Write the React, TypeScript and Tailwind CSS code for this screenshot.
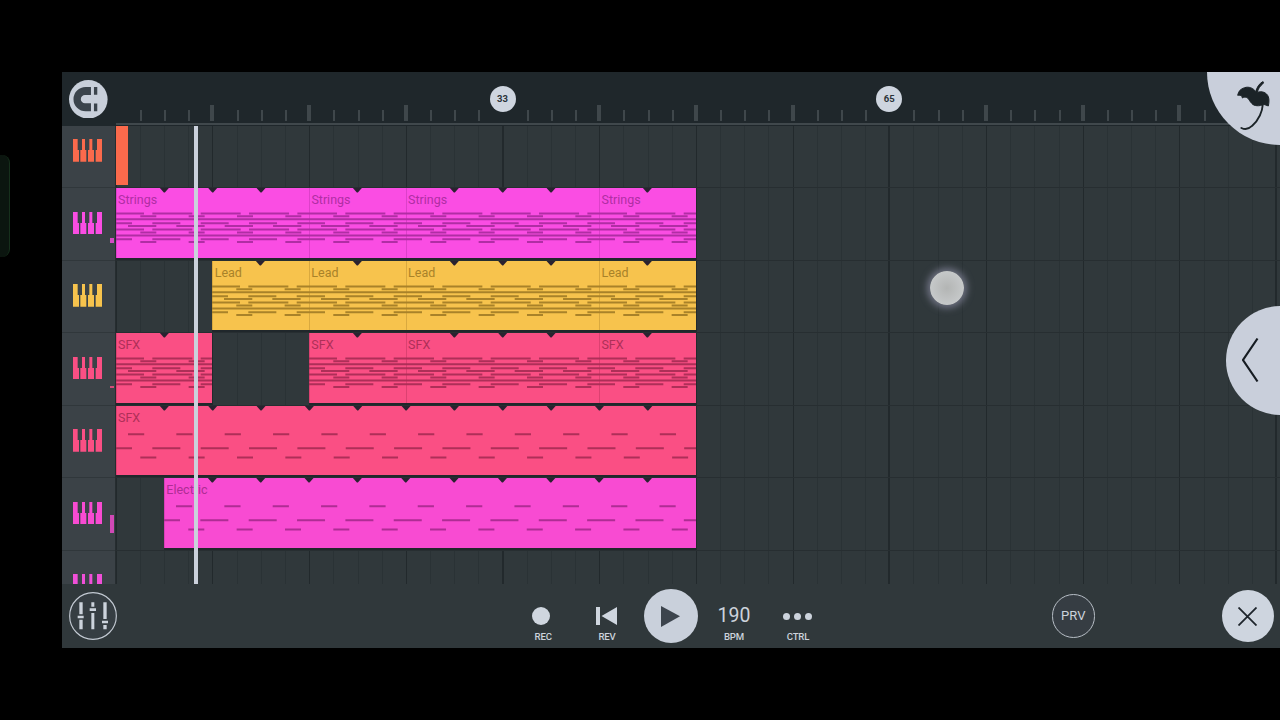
import type { ReactNode } from "react";

const BAR = 12.087;
const LOOP = BAR * 4;

type Note = [y: number, start: number, end: number];

type Clip = {
  bars: number;
  label?: string;
  gap?: boolean;
};

type Track = {
  color: string;
  ink: string;
  notes: Note[];
  clips: Clip[];
  meter?: { top: number; height: number };
};

const CHORDS: Note[] = [
  [25.6, -12, 28],
  [28.3, 24.3, 40.3],
  [31.2, -12, 36.4],
  [35.2, -12, 16],
  [38, 12, 40.3],
  [41.6, -12, 28],
  [44.4, 24.3, 40.3],
  [47.4, -12, 36.4],
  [51.2, -12, 16],
  [54, 24.3, 40.3],
];

const ARP: Note[] = [
  [28.2, 12, 28.2],
  [42.3, -12, 16],
  [51.5, 24.3, 40.3],
];

const TRACKS: Track[] = [
  { color: "#fb6a4c", ink: "#a8412c", notes: [], clips: [{ bars: 0.97 }] },
  {
    color: "#fa4de3",
    ink: "#b02ea4",
    notes: CHORDS,
    meter: { top: 50, height: 5 },
    clips: [
      { bars: 16, label: "Strings" },
      { bars: 8, label: "Strings" },
      { bars: 16, label: "Strings" },
      { bars: 8, label: "Strings" },
    ],
  },
  {
    color: "#f7c34d",
    ink: "#a98229",
    notes: CHORDS,
    clips: [
      { bars: 8, gap: true },
      { bars: 8, label: "Lead" },
      { bars: 8, label: "Lead" },
      { bars: 16, label: "Lead" },
      { bars: 8, label: "Lead" },
    ],
  },
  {
    color: "#fa4f84",
    ink: "#ae2f58",
    notes: CHORDS,
    meter: { top: 53, height: 2 },
    clips: [
      { bars: 8, label: "SFX" },
      { bars: 8, gap: true },
      { bars: 8, label: "SFX" },
      { bars: 16, label: "SFX" },
      { bars: 8, label: "SFX" },
    ],
  },
  {
    color: "#fa4f84",
    ink: "#ae2f58",
    notes: ARP,
    clips: [{ bars: 48, label: "SFX" }],
  },
  {
    color: "#f84bd2",
    ink: "#ae2d94",
    notes: ARP,
    meter: { top: 37, height: 18 },
    clips: [
      { bars: 4, gap: true },
      { bars: 44, label: "Electric" },
    ],
  },
  { color: "#f04fd8", ink: "#ae2d94", notes: [], clips: [] },
];

const COLUMNS = Array.from({ length: 49 }, (_, i) => i);

function columnStyle(i: number) {
  if (i > 0 && i % 16 === 0) return "-ml-px w-[25.174px] border-l-2 border-[#22292c]";
  if (i % 4 === 0) return "w-[24.174px] border-l border-[#22292c]";
  return "w-[24.174px] border-l border-[#2a3235]";
}

function ClipView({ clip, track }: { clip: Clip; track: Track }) {
  const width = clip.bars * BAR;
  if (clip.gap) return <div className="shrink-0" style={{ width }} />;

  const loops = Math.ceil(clip.bars / 4);
  let lines = "";
  let notches = "";
  for (let i = 0; i <= loops; i++) {
    const x = i * LOOP;
    for (const [y, start, end] of track.notes) {
      lines += `M${Math.max(0, x + start)} ${y}H${x + end}`;
    }
    if (i > 0 && i < loops) notches += `M${x - 4.5} 0H${x + 4.5}L${x + 0.5} 4.5H${x - 0.5}Z`;
  }

  return (
    <div
      className="relative h-[69.400px] shrink-0 overflow-hidden"
      style={{ width, backgroundColor: track.color }}
    >
      <svg className="absolute inset-0 size-full" fill="none">
        <path d={lines} stroke={track.ink} strokeWidth="2" />
        <path d={notches} fill="#2a2230" />
        {clip.label && <path d="M0.4 0V70" stroke={track.ink} strokeOpacity="0.55" strokeWidth="0.8" />}
      </svg>
      {clip.label && (
        <p
          className="relative pt-[4px] pl-[2.200px] text-[12.500px] leading-4 whitespace-nowrap"
          style={{ color: track.ink }}
        >
          {clip.label}
        </p>
      )}
    </div>
  );
}

function PianoIcon({ color }: { color: string }) {
  return (
    <svg viewBox="0 0 87 68" className="h-[22.700px] w-[29px]" fill={color}>
      <path d="M0 0H14V33H18V68H0ZM27 0H36V33H40V68H22V33H27ZM49 0H58V33H63V68H45V33H49ZM72 0H87V68H68V33H72Z" />
    </svg>
  );
}

function TrackHead({ track }: { track: Track }) {
  return (
    <div className="relative h-[72.500px] shrink-0 border-t border-[#30373b] pt-[23.300px] pl-[11px]">
      <PianoIcon color={track.color} />
      {track.meter && (
        <span
          className="absolute right-px w-[4px] opacity-80"
          style={{ ...track.meter, backgroundColor: track.color }}
        />
      )}
    </div>
  );
}

function Ruler() {
  return (
    <div className="flex h-[54px] bg-[#1f272b]">
      <div className="w-[53.800px] shrink-0 pt-[7.800px] pl-[7.300px]">
        <svg viewBox="0 0 116 116" className="size-[38.600px]">
          <circle cx="58" cy="58" r="58" fill="#c8cfda" />
          <path
            d="M66 21H50A36.500 36.500 0 0 0 50 94H66V70H48A12.500 12.500 0 0 1 48 45H66Z"
            fill="#3b444c"
          />
          <path d="M75 21H85V44H75ZM75 71H85V94H75Z" fill="#3b444c" />
        </svg>
      </div>
      <div className="flex min-w-0 flex-1 flex-col overflow-hidden">
        <div className="flex h-[50.500px]">
          {COLUMNS.map((i) => (
            <div key={i} className="relative flex w-[24.174px] shrink-0 items-end pb-[2px]">
              {i > 0 && i % 16 === 0 ? (
                <span className="absolute top-[13.700px] left-0 flex size-[26px] -translate-x-1/2 items-center justify-center rounded-full bg-[#ced5df] text-[9.500px] font-bold text-[#2b3339]">
                  {i * 2 + 1}
                </span>
              ) : i > 0 && i % 4 === 0 ? (
                <span className="-ml-[2px] h-[16px] w-[4px] bg-[#3f474b]" />
              ) : i > 0 ? (
                <span className="h-[11px] w-[2px] bg-[#3f474b]" />
              ) : null}
            </div>
          ))}
        </div>
        <div className="h-[2px] shrink-0 bg-[#40484c]" />
      </div>
    </div>
  );
}

function Playlist() {
  return (
    <div className="flex h-[458px] overflow-hidden">
      <div className="w-[53.800px] shrink-0 overflow-hidden border-r border-[#262d30] bg-[#3b4247]">
        <div className="-mt-[11.200px] flex flex-col">
          {TRACKS.map((track, i) => (
            <TrackHead key={i} track={track} />
          ))}
        </div>
      </div>
      <div className="relative min-w-0 flex-1 overflow-hidden">
        <div className="absolute inset-0 flex">
          {COLUMNS.map((i) => (
            <div key={i} className={`shrink-0 ${columnStyle(i)}`} />
          ))}
        </div>
        <div className="relative -mt-[11.200px] flex flex-col">
          {TRACKS.map((track, i) => (
            <div key={i} className="flex h-[72.500px] shrink-0 border-t border-[#272e31]">
              {track.clips.map((clip, j) => (
                <div
                  key={j}
                  className={clip.label ? "h-[71.500px] border-b-2 border-[#20272b]" : ""}
                >
                  <ClipView clip={clip} track={track} />
                </div>
              ))}
            </div>
          ))}
        </div>
        <div className="absolute inset-y-0 left-[78.300px] w-[4.200px] bg-[#cbd1dc]" />
      </div>
    </div>
  );
}

function Control({ label, children }: { label: string; children: ReactNode }) {
  return (
    <div className="flex w-[64px] shrink-0 flex-col items-center">
      <div className="flex h-[24px] items-center justify-center">{children}</div>
      <span className="mt-[2px] text-[9.600px] leading-[14px] font-medium tracking-[-0.200px]">{label}</span>
    </div>
  );
}

function Transport() {
  return (
    <div className="flex h-[64px] text-[#ccd3dc]">
      <svg viewBox="0 0 144 144" className="mt-[8.300px] ml-[6.800px] size-[48px] shrink-0">
        <circle cx="72" cy="72" r="70" fill="#363e43" stroke="#c3cad3" strokeWidth="3.500" />
        <path
          d="M31 31H41V67H31ZM31 83H41V112H31ZM26 71H44V79H26ZM67 31H76V44H67ZM67 63H76V112H67ZM62 49H81V57H62ZM103 31H113V81H103ZM103 99H113V112H103ZM99 86H117V94H99Z"
          fill="#ccd3dc"
        />
      </svg>
      <div className="ml-[396px] flex w-[317px] shrink-0 pt-[20px]">
        <div className="flex w-[62.200px] shrink-0 flex-col pl-[19.300px]">
          <div className="mt-[3px] size-[18px] rounded-full bg-[#cfd6df]" />
          <span className="mt-[5px] ml-[2.500px] text-[9.600px] leading-[14px] font-medium tracking-[-0.200px]">
            REC
          </span>
        </div>
        <Control label="REV">
          <svg viewBox="0 0 21 18" className="h-[18px] w-[21px]" fill="#cfd6df">
            <path d="M0 0H4V18H0ZM21 0V18L5.500 9Z" />
          </svg>
        </Control>
        <div className="-mt-[15px] mr-[4.300px] ml-[4.700px] flex size-[54px] shrink-0 items-center justify-center rounded-full bg-[#c9d0db]">
          <svg viewBox="0 0 19 21" className="h-[21px] w-[19px]" fill="#3c444d">
            <path d="M0 0L19 10.200L0 21Z" />
          </svg>
        </div>
        <Control label="BPM">
          <span className="text-[19.500px] leading-6">190</span>
        </Control>
        <Control label="CTRL">
          <span className="flex gap-[4px]">
            <i className="size-[7px] rounded-full bg-[#ccd3dc]" />
            <i className="size-[7px] rounded-full bg-[#ccd3dc]" />
            <i className="size-[7px] rounded-full bg-[#ccd3dc]" />
          </span>
        </Control>
      </div>
      <button className="mt-[10px] ml-auto flex size-[43.500px] shrink-0 items-center justify-center rounded-full border border-[#b7bec6] bg-[#363d43] text-[13px]">
        PRV
      </button>
      <button className="mt-[6px] mr-[6px] ml-[127px] flex size-[52px] shrink-0 items-center justify-center rounded-full bg-[#ced5df] pr-[1.500px]">
        <svg viewBox="0 0 19 19" className="size-[19px]" stroke="#1e252c" strokeWidth="1.800">
          <path d="M0.500 0.500L18.500 18.500M18.500 0.500L0.500 18.500" />
        </svg>
      </button>
    </div>
  );
}

function FruitButton() {
  return (
    <div className="absolute -top-[73px] -right-[73px] size-[146px] rounded-full bg-[#c9cfdb]">
      <svg viewBox="228 42 104 154" className="absolute top-[81px] left-[29px] h-[51.300px] w-[34.700px]">
        <path
          d="M233 88C235 75 243 68 254 65C266 61 280 66 287 77C290 65 298 52 308 47C312 47 311 51 308 54C300 60 294 69 292 79C306 74 320 80 325 92C328 101 327 111 325 120L311 115C299 122 281 120 276 113C270 107 267 101 263 96C257 92 252 93 247 96L246 91C241 87 237 88 233 88Z"
          fill="#1b2327"
          stroke="#1b2327"
          strokeWidth="3"
          strokeLinejoin="round"
        />
        <path
          d="M309 112C307 137 295 163 276 180C266 190 254 191 244 186"
          fill="none"
          stroke="#1b2327"
          strokeWidth="5.500"
          strokeLinecap="round"
        />
      </svg>
    </div>
  );
}

export default function App() {
  return (
    <div className="relative h-[720px] w-[1280px] overflow-hidden bg-black pt-[72px] pl-[62px] font-['Roboto',sans-serif]">
      <div className="absolute top-[155px] left-0 h-[102px] w-[9.500px] rounded-r-lg border-r border-[#16301c] bg-[#0b150f]" />
      <main className="relative h-[576px] overflow-hidden bg-[#30383b]">
        <Ruler />
        <Playlist />
        <Transport />
        <FruitButton />
        <div className="absolute top-[233.500px] -right-[54.500px] size-[109px] rounded-full bg-[#c9cfdb]">
          <svg viewBox="0 0 17 46" className="absolute top-[31px] left-[16px] h-[46px] w-[17px]" fill="none">
            <path d="M15.500 1.500L1 23L15.500 44.500" stroke="#161c22" strokeWidth="2.200" />
          </svg>
        </div>
        <div className="absolute top-[199.400px] left-[868.300px] size-[34px] rounded-full bg-radial from-[#b3b5b4] to-[#ced1d3] shadow-[0_0_7px_3px_#6f7283]" />
      </main>
    </div>
  );
}
